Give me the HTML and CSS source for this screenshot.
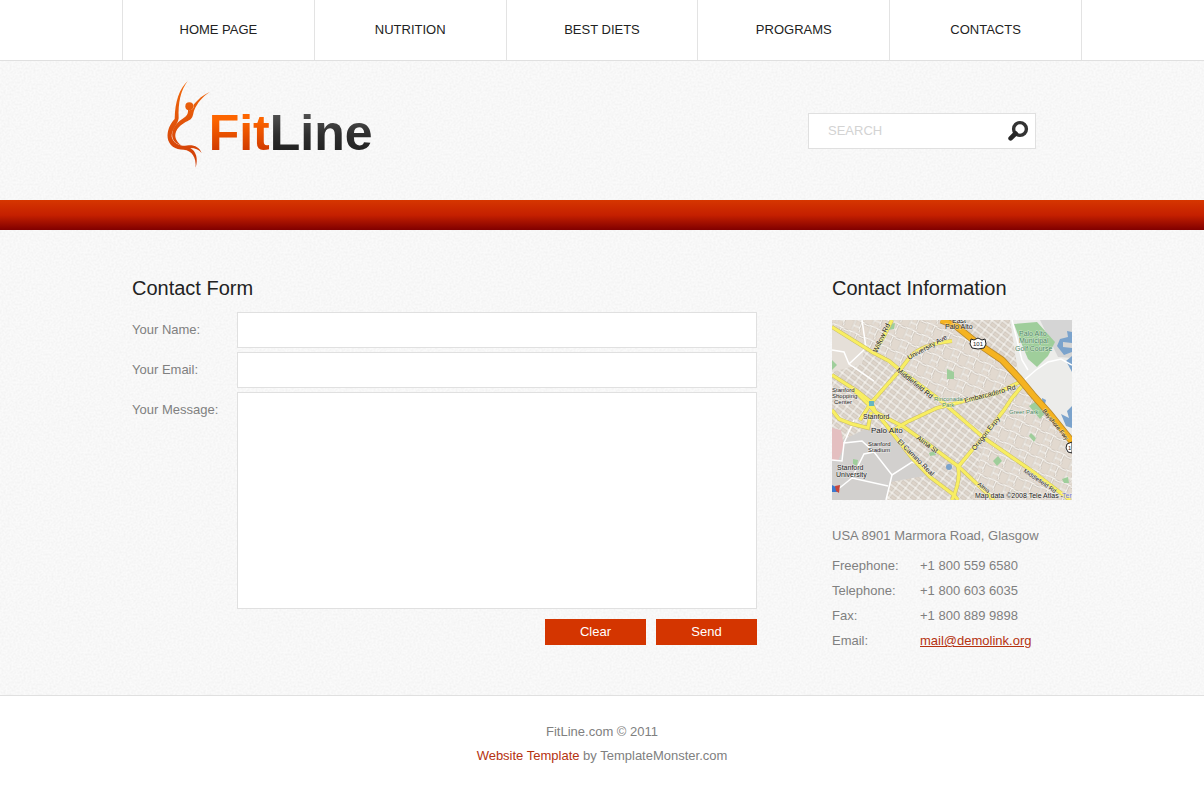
FILE: index.html
```
<!DOCTYPE html>
<html lang="en">
<head>
    <meta charset="UTF-8">
    <title>FitLine - Contacts</title>
    <link rel="stylesheet" href="styles.css">
</head>
<body>
    <nav class="menu">
        <ul class="container">
            <li><a href="#">HOME PAGE</a></li>
            <li><a href="#">NUTRITION</a></li>
            <li><a href="#">BEST DIETS</a></li>
            <li><a href="#">PROGRAMS</a></li>
            <li><a href="#">CONTACTS</a></li>
        </ul>
    </nav>

    <header class="container header">
        <a href="#" class="logo" aria-label="FitLine">
            <svg width="210" height="90" viewBox="45 30 630 270">
                <defs>
                    <linearGradient id="orange" gradientUnits="userSpaceOnUse" x1="0" y1="125" x2="0" y2="242">
                        <stop offset="0.2" stop-color="#fd6500"/>
                        <stop offset="1" stop-color="#d03a00"/>
                    </linearGradient>
                    <linearGradient id="dark" gradientUnits="userSpaceOnUse" x1="0" y1="125" x2="0" y2="242">
                        <stop offset="0" stop-color="#555"/>
                        <stop offset="0.6" stop-color="#2d2d2d"/>
                        <stop offset="1" stop-color="#222"/>
                    </linearGradient>
                    <linearGradient id="figure" gradientUnits="userSpaceOnUse" x1="0" y1="35" x2="0" y2="290">
                        <stop offset="0" stop-color="#f26a0c"/>
                        <stop offset="1" stop-color="#cf3c08"/>
                    </linearGradient>
                </defs>
                <g fill="url(#figure)">
                    <path d="M113 33C88 57 75 93 74 147C59 163 51 183 53 203C56 226 76 239 101 239C126 242 139 261 137 293C145 264 138 244 121 234C135 234 147 239 155 249C149 233 134 225 116 226C95 231 69 221 65 200C64 178 84 164 86 145C84 98 92 61 113 33Z"/>
                    <path d="M180 66C157 75 142 91 130 105C133 116 126 122 114 120C115 132 109 139 98 146C76 160 64 179 67 201C70 215 80 222 93 226C79 213 72 201 78 185C87 166 104 158 117 151C130 144 129 131 132 122C142 99 157 80 180 66Z"/>
                    <circle cx="118" cy="109" r="12"/>
                </g>
                <text class="logo-text" x="176" y="240"><tspan fill="url(#orange)">Fit</tspan><tspan fill="url(#dark)">Line</tspan></text>
            </svg>
        </a>
        <form class="search">
            <input type="text" placeholder="SEARCH" aria-label="Search">
            <button type="submit" aria-label="Search">
                <svg width="22" height="22" viewBox="0 0 22 22">
                    <circle cx="13" cy="9" r="6.4" fill="none" stroke="#333" stroke-width="3.4"/>
                    <path d="M8.5 13.5L3.6 18.4" stroke="#262626" stroke-width="4.6" stroke-linecap="round"/>
                </svg>
            </button>
        </form>
    </header>

    <div class="stripe"></div>

    <main class="container content">
        <section>
            <h2>Contact Form</h2>
            <form class="contact-form">
                <label for="name">Your Name:</label>
                <input type="text" id="name">
                <label for="email">Your Email:</label>
                <input type="email" id="email">
                <label for="message">Your Message:</label>
                <textarea id="message"></textarea>
                <div class="buttons">
                    <button type="reset">Clear</button>
                    <button type="submit">Send</button>
                </div>
            </form>
        </section>

        <aside>
            <h2>Contact Information</h2>
            <svg class="map" viewBox="0 0 240 180" role="img" aria-label="Map of Palo Alto">
                <defs>
                    <pattern id="streets" width="8" height="6" patternUnits="userSpaceOnUse" patternTransform="rotate(37)">
                        <rect width="8" height="6" fill="#ddd4ca"/>
                        <path d="M0 0H8M0 0V6M8 0V6M0 6H8" stroke="#b9b1a8" stroke-width="2.4"/>
                        <path d="M0 0H8M0 0V6M8 0V6M0 6H8" stroke="#f8f5f0" stroke-width="1.4"/>
                    </pattern>
                    <pattern id="blocks" width="17" height="13" patternUnits="userSpaceOnUse" patternTransform="rotate(24)">
                        <rect width="17" height="13" fill="#e2d9cf"/>
                        <path d="M0 4Q8 0 17 4M5 3V13M12 2Q10 8 13 13M5 9H12" fill="none" stroke="#b9b1a8" stroke-width="2.2"/>
                        <path d="M0 4Q8 0 17 4M5 3V13M12 2Q10 8 13 13M5 9H12" fill="none" stroke="#f8f5f0" stroke-width="1.3"/>
                    </pattern>
                </defs>
                <rect width="240" height="180" fill="url(#streets)"/>
                <path d="M0 0H122L187 62L165 73L108 86L68 50L0 7Z" fill="url(#blocks)"/>
                <path d="M140 180L152 118L190 64L240 122V180Z" fill="url(#blocks)"/>
                <!-- open land, campus and hospital -->
                <path d="M178 0H240V122L187 58Z" fill="#ececea"/>
                <path d="M208 0H240V38L226 37Z" fill="#d5d5d5"/>
                <path d="M0 125L38 107L62 112L98 155L58 162L54 180H0Z" fill="#d2d0ce"/>
                <path d="M0 8L32 28L30 44L0 52Z" fill="#e5dfd8"/>
                <path d="M0 108L9 110L12 126L6 141L0 140Z" fill="#e4bfc0"/>
                <!-- parks -->
                <g fill="#9fce9b">
                    <path d="M182 4L205 2L223 22L216 36L205 47L196 39L188 20Z"/>
                    <path d="M55 5L63 3L62 9L56 10Z"/>
                    <path d="M0 40L5 45L0 50Z"/>
                    <path d="M115 49L122 52V59H115Z"/>
                    <path d="M21 139L26 140L25 146L21 144Z"/>
                    <path d="M161 141L166 136L170 141L165 146Z"/>
                    <path d="M197 86L207 79L215 91L208 99Z"/>
                    <path d="M199 113L204 118L202 122L197 116Z"/>
                    <path d="M230 159L236 157L237 163L232 163Z"/>
                    <path d="M97 133L102 131L104 135L98 136Z"/>
                </g>
                <!-- water -->
                <g fill="#7ba3cc">
                    <path d="M240 12L235 11L236 17L228 19L225 26L232 35L240 32V28L231 27L231 22L240 23Z"/>
                    <path d="M240 36L234 41L240 52Z"/>
                    <path d="M210 78L214 80L212 88L219 93L226 102L222 103L211 92Z"/>
                    <path d="M240 86L235 91L237 98L229 94L234 106L240 108Z"/>
                    <circle cx="117" cy="147" r="3"/>
                </g>
                <g fill="none" stroke="#fff" stroke-width="1.5">
                    <path d="M30 0L34 28L17 44M0 30L12 32L17 44L42 61"/>
                    <path d="M190 62L204 50L216 42L229 39L240 45M180 0L190 40L196 50"/>
                    <path d="M0 140L10 141L12 123L30 121L42 132L60 155L80 142L92 147"/>
                    <path d="M20 158L32 134L42 132M5 170L20 158L56 166M60 155L54 180M22 100L12 123"/>
                </g>
                <!-- main roads -->
                <g class="road-casing">
                    <path id="middlefield" d="M0 7L40 32L57 41L68 50L108 80L152 118L200 151L238 180"/>
                    <path id="university" d="M120 21Q90 24 78 37L68 50L39 83L28 100"/>
                    <path id="camino" d="M0 55L25 71L39 82L43 91L62 115L80 138L98 157L122 175L126 180"/>
                    <path id="alma" d="M20 68L36 84L43 92L72 107L100 127L127 147L162 180"/>
                    <path id="embarcadero" d="M60 111L75 102L105 88L132 81L165 73L190 61"/>
                    <path id="oregon" d="M190 66L180 78L172 90L155 112L126 147Q129 160 120 180"/>
                    <path id="willow" d="M60 0L52 16L41 34"/>
                    <path id="stanford" d="M0 90L7 99L20 104L36 108L39 92"/>
                </g>
                <g class="road">
                    <use href="#middlefield"/>
                    <use href="#university"/>
                    <use href="#camino"/>
                    <use href="#alma"/>
                    <use href="#embarcadero"/>
                    <use href="#oregon"/>
                    <use href="#willow"/>
                    <use href="#stanford"/>
                </g>
                <path d="M109 0L124 6L145 23L170 40L187 58L201 75L217 93L242 124" fill="none" stroke="#b98a2c" stroke-width="7"/>
                <path d="M109 0L124 6L145 23L170 40L187 58L201 75L217 93L242 124" fill="none" stroke="#f5b321" stroke-width="5.4"/>
                <g fill="#fff" stroke="#222">
                    <path d="M139 19L142 20L146 18L150 20L153 19L154 24L152 28L146 29L140 28L138 24Z"/>
                    <path d="M240 122L235 124L234 128L236 132L240 133Z"/>
                </g>
                <rect x="37" y="81" width="5" height="5" fill="#67b6c0"/>
                <g class="map-label">
                    <text x="120" y="3">East</text>
                    <text x="113" y="9">Palo Alto</text>
                    <text x="31" y="99">Stanford</text>
                    <text class="small" x="0" y="72">Stanford</text>
                    <text class="small" x="0" y="78">Shopping</text>
                    <text class="small" x="2" y="84">Center</text>
                    <text class="small" x="36" y="126">Stanford</text>
                    <text class="small" x="36" y="132">Stadium</text>
                    <text x="5" y="150">Stanford</text>
                    <text x="4" y="157">University</text>
                    <text class="city" x="39" y="113">Palo Alto</text>
                    <text class="small" x="141" y="26">101</text>
                    <text class="small" x="236" y="130">1</text>
                    <text transform="translate(45 33) rotate(-65)">Willow Rd</text>
                    <text transform="translate(77 40) rotate(-29)">University Ave</text>
                    <text transform="translate(64 51) rotate(39)">Middlefield Rd</text>
                    <text transform="translate(133 83) rotate(-15)">Embarcadero Rd</text>
                    <text transform="translate(143 131) rotate(-52)">Oregon Expy</text>
                    <text transform="translate(84 119) rotate(36)">Alma St</text>
                    <text transform="translate(65 122) rotate(45)">El Camino Real</text>
                    <text class="small" transform="translate(191 152) rotate(34)">Middlefield Rd</text>
                    <text class="small" transform="translate(145 165) rotate(38)">Alma</text>
                    <text class="small" transform="translate(210 91) rotate(51)">Bayshore Fwy</text>
                    <text x="143" y="178">Map data ©2008 Tele Atlas -</text>
                    <text class="terms" x="230" y="178">Terms</text>
                </g>
                <g class="map-label park">
                    <text x="187" y="16">Palo Alto</text>
                    <text x="187" y="23">Municipal</text>
                    <text x="183" y="31">Golf Course</text>
                    <text class="small" x="102" y="81">Rinconada</text>
                    <text class="small" x="110" y="87">Park</text>
                    <text class="small" x="177" y="94">Greer Park</text>
                </g>
                <path d="M0 165L4 167L6 172H0Z" fill="#3b7ad0"/>
                <path d="M3 166L8 165L7 173L4 171Z" fill="#c8473c"/>
            </svg>
            <p class="address">USA 8901 Marmora Road, Glasgow</p>
            <dl class="phones">
                <dt>Freephone:</dt>
                <dd>+1 800 559 6580</dd>
                <dt>Telephone:</dt>
                <dd>+1 800 603 6035</dd>
                <dt>Fax:</dt>
                <dd>+1 800 889 9898</dd>
                <dt>Email:</dt>
                <dd><a href="mailto:mail@demolink.org">mail@demolink.org</a></dd>
            </dl>
        </aside>
    </main>

    <footer class="footer">
        <p>FitLine.com © 2011</p>
        <p><a href="#">Website Template</a> by TemplateMonster.com</p>
    </footer>
</body>
</html>
```
FILE: styles.css
```
* {
    box-sizing: border-box;
}
body {
    margin: 0;
    background: #fafafa url("data:image/svg+xml,%3Csvg xmlns='http://www.w3.org/2000/svg' width='200' height='200'%3E%3Cfilter id='n'%3E%3CfeTurbulence type='fractalNoise' baseFrequency='.5' numOctaves='3' stitchTiles='stitch'/%3E%3CfeColorMatrix values='0 0 0 0 0 0 0 0 0 0 0 0 0 0 0 .06 0 0 0 -.02'/%3E%3C/filter%3E%3Crect width='200' height='200' filter='url(%23n)'/%3E%3C/svg%3E");
    font-family: "Liberation Sans", Arial, sans-serif;
    font-size: 13px;
    line-height: 24px;
    color: #808080;
}
ul, dl, dd, p, h2 {
    margin: 0;
    padding: 0;
}
a {
    color: #b53210;
}
.container {
    max-width: 960px;
    margin: 0 auto;
}

/* menu */
.menu {
    background: #fff;
    border-bottom: 1px solid #e0e0e0;
}
.menu ul {
    display: flex;
    list-style: none;
    border-left: 1px solid #e3e3e3;
}
.menu li {
    flex: 1;
    border-right: 1px solid #e3e3e3;
}
.menu a {
    display: block;
    line-height: 60px;
    text-align: center;
    text-decoration: none;
    color: #222;
}

/* header */
.header {
    display: flex;
    justify-content: space-between;
    padding: 19px 46px 30px 43px;
}
.logo svg {
    display: block;
}
.logo-text {
    font-size: 150px;
    font-weight: bold;
}
.search {
    display: flex;
    align-items: center;
    align-self: flex-start;
    width: 228px;
    height: 36px;
    margin-top: 33px;
    background: #fff;
    border: 1px solid #e0e0e0;
}
.search input {
    flex: 1;
    min-width: 0;
    padding: 0 0 0 19px;
    border: none;
    background: none;
    font: inherit;
    color: #222;
}
.search input::placeholder {
    color: #d3d3d3;
}
.search button {
    display: flex;
    padding: 0;
    margin-right: 6px;
    border: none;
    background: none;
    cursor: pointer;
}
.stripe {
    height: 30px;
    background: linear-gradient(#d63600, #c52000 50%, #800000);
}

/* content */
.content {
    display: grid;
    grid-template-columns: 1fr 240px;
    gap: 75px;
    padding: 43px 10px 42px;
}
h2 {
    font-size: 20px;
    font-weight: normal;
    line-height: 30px;
    color: #222;
}
.contact-form {
    display: grid;
    grid-template-columns: 105px 1fr;
    row-gap: 4px;
    margin-top: 9px;
}
.contact-form label {
    line-height: 36px;
}
.contact-form input,
.contact-form textarea {
    display: block;
    width: 100%;
    height: 36px;
    padding: 8px;
    background: #fff;
    border: 1px solid #e0e0e0;
    font: inherit;
    color: #808080;
}
.contact-form textarea {
    height: 217px;
    resize: none;
}
.buttons {
    grid-column: 2;
    display: flex;
    justify-content: flex-end;
    gap: 10px;
    margin-top: 6px;
}
.buttons button {
    width: 101px;
    height: 26px;
    padding: 0;
    border: none;
    background: #d43500;
    font: inherit;
    color: #fff;
    cursor: pointer;
}
.map {
    display: block;
    width: 100%;
    margin: 17px 0 24px;
}
.road-casing {
    fill: none;
    stroke: #c9bd68;
    stroke-width: 4px;
}
.road {
    fill: none;
    stroke: #f8ee62;
    stroke-width: 3px;
}
.map-label {
    font-size: 7px;
    fill: #222;
    paint-order: stroke;
    stroke: rgba(255, 255, 255, 0.5);
    stroke-width: 1px;
}
.map-label.park {
    fill: #4c8562;
}
.map-label .small {
    font-size: 6px;
}
.map-label .city {
    font-size: 8px;
}
.map-label .terms {
    fill: #7777cc;
}
.address {
    margin-bottom: 5px;
}
.phones {
    display: grid;
    grid-template-columns: 88px 1fr;
    line-height: 25px;
}

/* footer */
.footer {
    padding: 24px 0 32px;
    background: #fff;
    border-top: 1px solid #e0e0e0;
    text-align: center;
}
.footer a {
    text-decoration: none;
}
```
